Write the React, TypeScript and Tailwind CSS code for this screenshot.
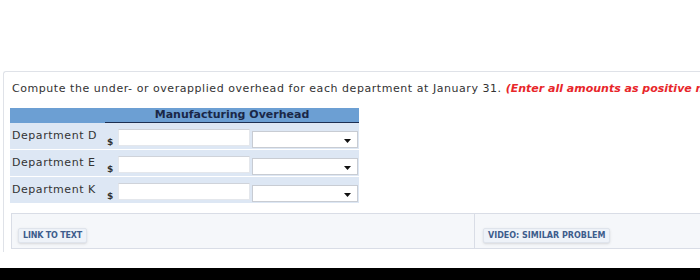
import React from 'react';

const rows = ['Department D', 'Department E', 'Department K'];

function Row({ label, first }: { label: string; first?: boolean }) {
  return (
    <div className={`flex h-[26px] bg-[#dde7f4] ${first ? '' : 'mt-px'}`}>
      <div className="w-[95px] pl-[2px] pt-[6px] leading-[13px] text-[11px] tracking-[0.55px] text-[#333]">{label}</div>
      <div className="w-[13px] pl-[2px] pt-[14px] leading-[10px] text-[9px] font-bold text-[#333]">$</div>
      <div className="mt-[6px] h-[17px] w-[132px] bg-white border border-[#e4e7ec] border-t-[#cfd3da]" />
      <div className="ml-[2px] mt-[8px] h-[17px] w-[106px] bg-white border border-[#c8ccd3] flex items-end justify-end pr-[6px] pb-[4px]">
        <svg width="7" height="4" viewBox="0 0 7 4"><path d="M0 0H7L3.5 4Z" fill="#111" /></svg>
      </div>
    </div>
  );
}

export default function App() {
  return (
    <div className="w-[700px] h-[280px] bg-white overflow-hidden flex flex-col" style={{ fontFamily: '"DejaVu Sans", Verdana, sans-serif' }}>
      <div className="h-[71px] shrink-0" />
      <div className="ml-[3px] w-[720px] h-[181px] shrink-0 border-l border-t border-[#dfe2e8] rounded-tl-[3px] pl-[6px]">
        <div className="pl-[2px] pt-[10px] h-[36px] whitespace-nowrap text-[11px] leading-[13px] tracking-[0.55px] text-[#333]">
          Compute the under- or overapplied overhead for each department at January 31.{' '}
          <span className="text-[#e8262a] font-bold italic tracking-normal">(Enter all amounts as positive n</span>
        </div>
        <div className="w-[349px]">
          <div className="flex h-[15px] bg-[#6c9fd3]">
            <div className="w-[95px]" />
            <div className="flex-1 border-b border-[#1d2f52] text-center text-[11px] leading-[13px] font-bold text-[#1a2747]">
              Manufacturing Overhead
            </div>
          </div>
          {rows.map((r, i) => (
            <Row key={r} label={r} first={i === 0} />
          ))}
        </div>
        <div className="mt-[10px] ml-[1px] h-[36px] flex border border-[#d9dde6] bg-[#f5f7fa]">
          <div className="w-[463px] border-r border-[#d9dde6] pl-[6px] pt-[7px]">
            <div className="inline-block h-[15px] px-[4px] rounded-[2px] bg-[#eef2f8] border border-[#dfe4ec] shadow-sm text-[8px] leading-[13px] font-bold text-[#3d5c8c] tracking-tight">
              LINK TO TEXT
            </div>
          </div>
          <div className="pl-[8px] pt-[7px]">
            <div className="inline-block h-[15px] px-[4px] rounded-[2px] bg-[#eef2f8] border border-[#dfe4ec] shadow-sm text-[8px] leading-[13px] font-bold text-[#3d5c8c]">
              VIDEO: SIMILAR PROBLEM
            </div>
          </div>
        </div>
      </div>
      <div className="flex-1" />
      <div className="h-[12px] shrink-0 bg-black" />
    </div>
  );
}
